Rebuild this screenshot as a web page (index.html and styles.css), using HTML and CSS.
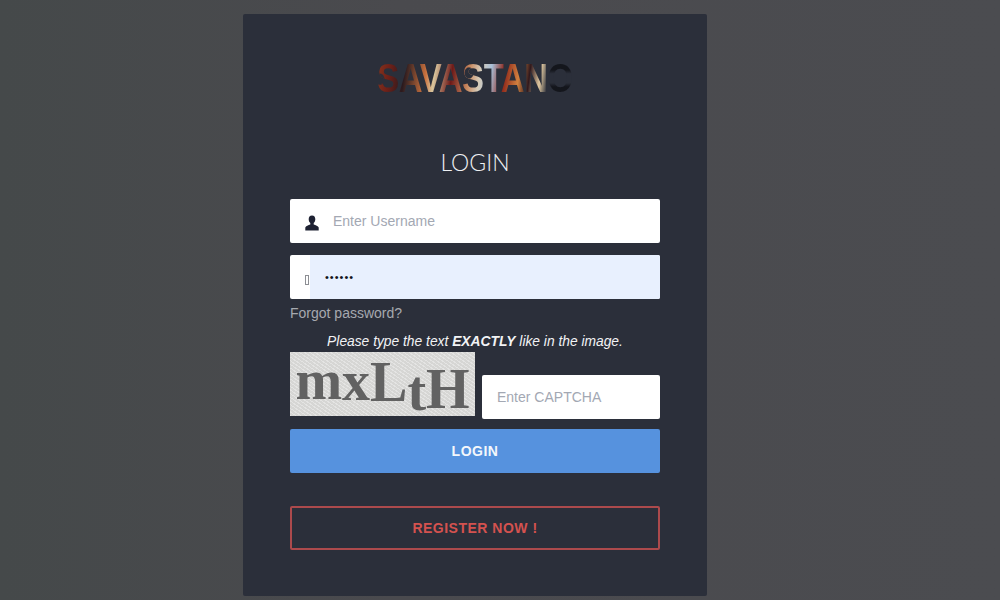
FILE: index.html
```html
<!DOCTYPE html>
<html lang="en">

<head>
    <meta charset="UTF-8">
    <title>Login</title>
    <link rel="stylesheet" href="styles.css">
</head>

<body>
    <main class="kort">
        <div class="logo">SAVASTAN<span class="logo-o">O</span></div>
        <h1>LOGIN</h1>

        <div class="felt">
            <svg class="ikon" width="16" height="16" viewBox="0 0 16 16">
                <path d="M8 .5C5.700.5 4.700 2.200 4.700 4.200c0 1.500.6 3 1.600 3.900v1.500c-1.900.7-4.500 1.500-5 2.900V15.500h13.400v-3c-.5-1.400-3.100-2.200-5-2.900V8.100c1-.9 1.600-2.400 1.600-3.900C11.300 2.200 10.300.5 8 .5z" fill="#1e2233" />
            </svg>
            <span class="pladsholder">Enter Username</span>
        </div>

        <div class="felt kodeord">
            <span class="ikon-boks"><span class="tofu"></span></span>
            <span class="udfyldt">••••••</span>
        </div>

        <a class="glemt" href="#">Forgot password?</a>
        <p class="besked">Please type the text <b>EXACTLY</b> like in the image.</p>

        <div class="captcha-raekke">
            <div class="captcha">
                <span class="b1">m</span><span class="b2">x</span><span class="b3">L</span><span class="b4">t</span><span class="b5">H</span>
            </div>
            <div class="felt captcha-felt">
                <span class="pladsholder">Enter CAPTCHA</span>
            </div>
        </div>

        <button class="knap login">LOGIN</button>
        <button class="knap register">REGISTER NOW !</button>
    </main>
</body>

</html>
```

FILE: styles.css
```css
* {
    box-sizing: border-box;
}

html,
body {
    height: 100%;
}

body {
    margin: 0;
    overflow: hidden;
    background: linear-gradient(90deg, #45494a 0%, #4a4a4e 40%, #4b4c50 100%);
    font-family: "Liberation Sans", Arial, sans-serif;
}

.kort {
    width: 464px;
    height: 582px;
    margin: 14px 0 0 243px;
    padding: 46px 47px 0;
    background-color: #2b2f3a;
    border-radius: 2px;
}

.logo {
    width: 210px;
    height: 36px;
    margin: 0 auto;
    line-height: 36px;
    text-align: center;
    white-space: nowrap;
    font-size: 33px;
    font-weight: 700;
    letter-spacing: -0.5px;
    color: transparent;
    background:
        radial-gradient(circle at 10px 19px, #2b2f3a 0 4px, transparent 5px),
        radial-gradient(circle at 99px 14px, #2b2f3a 0 4px, transparent 5px),
        linear-gradient(100deg, #96401f 0%, #6e2018 10%, #2a1a1e 17%, #c9713e 27%, #d8c49c 31%, #6e1a18 39%, #c98a60 47%, #d6cbb8 52%, #a9c0d8 57%, #8c2418 63%, #d0803f 70%, #30181c 75%, #e0c8a0 80%, #2b2f3a 84%);
    -webkit-background-clip: text;
    background-clip: text;
    transform: scaleY(1.25);
}

.logo-o {
    color: transparent;
    background: linear-gradient(180deg, #14161c 0 34%, #2b2f3a 42% 62%, #14161c 70%);
    -webkit-background-clip: text;
    background-clip: text;
}

h1 {
    margin: 49px 0 0;
    height: 34px;
    line-height: 34px;
    text-align: center;
    font-family: Lato, "Liberation Sans", sans-serif;
    font-size: 23px;
    font-weight: 300;
    color: #eef0f3;
}

.felt {
    display: flex;
    align-items: center;
    height: 44px;
    margin-top: 20px;
    background-color: #fff;
    border-radius: 2px;
    overflow: hidden;
}

.ikon {
    margin: 4px 0 0 14px;
}

.pladsholder {
    margin-left: 13px;
    font-size: 14px;
    color: #a3a8b3;
}

.kodeord {
    margin-top: 12px;
}

.ikon-boks {
    display: flex;
    align-items: center;
    width: 20px;
    height: 100%;
    padding: 6px 0 0 15px;
}

.tofu {
    width: 4px;
    height: 10px;
    border: 1px solid #8d8f94;
}

.udfyldt {
    display: block;
    flex: 1;
    height: 100%;
    line-height: 44px;
    padding-left: 15px;
    font-size: 11px;
    letter-spacing: 1px;
    color: #11131a;
    background-color: #e8f0fe;
}

.glemt {
    display: block;
    margin-top: 6px;
    line-height: 17px;
    font-size: 14px;
    color: #a6a9af;
    text-decoration: none;
}

.besked {
    margin: 11px 0 0;
    line-height: 17px;
    text-align: center;
    font-size: 13.8px;
    font-style: italic;
    color: #f2f3f5;
}

.captcha-raekke {
    display: flex;
    margin-top: 2px;
}

.captcha {
    display: flex;
    align-items: center;
    justify-content: center;
    width: 185px;
    height: 64px;
    padding-top: 8px;
    background-color: #d6d6d4;
    background-image: repeating-linear-gradient(35deg, rgba(255, 255, 255, 0.35) 0 1px, transparent 1px 3px);
    font-family: "Liberation Serif", serif;
    font-weight: 700;
    font-size: 56px;
    line-height: 44px;
    color: #626262;
}

.captcha span {
    display: inline-block;
    filter: blur(0.5px);
}

.b1 {
    transform: translateY(-8px);
}

.b2 {
    transform: translateY(-7px);
}

.b3 {
    transform: translateY(-6px);
}

.b4 {
    transform: translateY(3px);
}

.b5 {
    transform: translateY(1px);
}

.captcha-felt {
    flex: 1;
    margin: 23px 0 0 7px;
}

.captcha-felt .pladsholder {
    margin-left: 15px;
}

.knap {
    display: block;
    width: 100%;
    height: 44px;
    font-family: "Liberation Sans", Arial, sans-serif;
    font-size: 14px;
    font-weight: 700;
    letter-spacing: 0.5px;
    border-radius: 2px;
}

.login {
    margin-top: 10px;
    border: 0;
    color: #f4f7fb;
    background-color: #5692de;
}

.register {
    margin-top: 33px;
    border: 2px solid #ac4a4c;
    color: #d4524f;
    background-color: transparent;
}
```
